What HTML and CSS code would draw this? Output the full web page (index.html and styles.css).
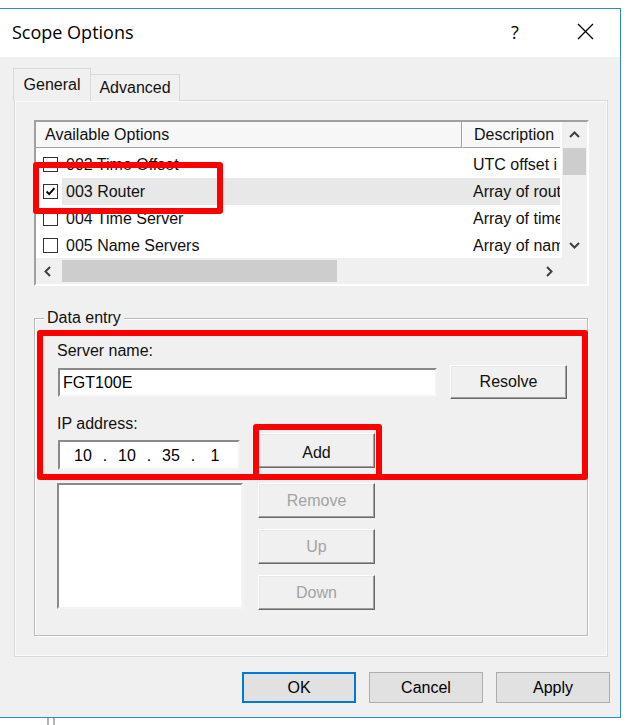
FILE: index.html
```html
<!DOCTYPE html>
<html lang="en">
<head>
    <meta charset="UTF-8">
    <meta name="viewport" content="width=device-width, initial-scale=1.0">
    <title>Scope Options</title>
    <link rel="stylesheet" href="styles.css">
</head>
<body>
    <div class="dialog">
        <div class="titlebar">
            <span class="title">Scope Options</span>
            <span class="help">?</span>
            <svg class="close" viewBox="0 0 17 17"><path d="M1 1L16 16M16 1L1 16"/></svg>
        </div>

        <div class="client">
            <div class="tabs">
                <div class="tab active">General</div>
                <div class="tab">Advanced</div>
            </div>

            <div class="panel">
                <!-- Options list -->
                <div class="listview">
                    <div class="lv-main">
                        <div class="lv-header">
                            <div class="h-name">Available Options</div>
                            <div class="h-desc">Description</div>
                        </div>
                        <div class="lv-row">
                            <span class="check"></span>
                            <span class="name">002 Time Offset</span>
                            <span class="desc">UTC offset i</span>
                        </div>
                        <div class="lv-row selected">
                            <span class="check"><svg viewBox="0 0 15 15"><path d="M3 7.5L6 10.5L12 3.5"/></svg></span>
                            <span class="name">003 Router</span>
                            <span class="desc">Array of rout</span>
                        </div>
                        <div class="lv-row">
                            <span class="check"></span>
                            <span class="name">004 Time Server</span>
                            <span class="desc">Array of time</span>
                        </div>
                        <div class="lv-row">
                            <span class="check"></span>
                            <span class="name">005 Name Servers</span>
                            <span class="desc">Array of nam</span>
                        </div>
                    </div>
                    <div class="vscroll">
                        <span class="arrow"><svg viewBox="0 0 11 7"><polyline points="1,6 5.5,1.5 10,6"/></svg></span>
                        <span class="vthumb"></span>
                        <span class="arrow bottom"><svg viewBox="0 0 11 7"><polyline points="1,1 5.5,5.5 10,1"/></svg></span>
                    </div>
                    <div class="hscroll">
                        <span class="harrow"><svg viewBox="0 0 7 11"><polyline points="6,1 1.5,5.5 6,10"/></svg></span>
                        <span class="hthumb"></span>
                        <span class="harrow right"><svg viewBox="0 0 7 11"><polyline points="1,1 5.5,5.5 1,10"/></svg></span>
                    </div>
                    <div class="corner"></div>
                </div>

                <!-- Data entry -->
                <div class="group">
                    <div class="group-title">Data entry</div>
                    <div class="field-label">Server name:</div>
                    <div class="row row-server">
                        <div class="input server">FGT100E</div>
                        <button class="btn3d resolve">Resolve</button>
                    </div>
                    <div class="field-label ip-label">IP address:</div>
                    <div class="row row-ip">
                        <div class="input ip">
                            <span class="octet">10</span><span class="dot">.</span>
                            <span class="octet">10</span><span class="dot">.</span>
                            <span class="octet">35</span><span class="dot">.</span>
                            <span class="octet">1</span>
                        </div>
                        <button class="btn3d add">Add</button>
                    </div>
                    <div class="row row-list">
                        <div class="listbox"></div>
                        <div class="btn-col">
                            <button class="btn3d" disabled>Remove</button>
                            <button class="btn3d" disabled>Up</button>
                            <button class="btn3d" disabled>Down</button>
                        </div>
                    </div>
                </div>
            </div>

            <div class="actions">
                <button class="btn default">OK</button>
                <button class="btn">Cancel</button>
                <button class="btn">Apply</button>
            </div>
        </div>

        <!-- red annotation boxes -->
        <div class="mark mark-router"></div>
        <div class="mark mark-entry"></div>
        <div class="mark mark-add"></div>
    </div>
    <div class="stub"></div>
</body>
</html>
```

FILE: styles.css
```css
* {
    box-sizing: border-box;
    margin: 0;
    padding: 0;
}

body {
    background: #fff;
    font-family: "Liberation Sans", Arial, sans-serif;
    font-size: 16px;
    color: #111;
}

.dialog {
    position: relative;
    width: 621px;
    margin-top: 8px;
    border: 1px solid #2f88d4;
    border-left: none;
    background: #fff;
}

.titlebar {
    display: flex;
    align-items: center;
    height: 48px;
    padding: 0 0 3px 12px;
    background: #fff;
}

.title {
    flex: 1;
    font-family: "Open Sans", sans-serif;
    font-size: 18px;
    color: #000;
}

.help {
    width: 20px;
    margin-right: 52px;
    text-align: center;
    font-family: "Open Sans", sans-serif;
    font-size: 18px;
    color: #000;
}

.close {
    width: 17px;
    height: 17px;
    margin-right: 26px;
    stroke: #000;
    stroke-width: 1.3;
    fill: none;
}

.client {
    background: #f0f0f0;
    padding: 11px 10px 14px 13px;
}

.tabs {
    position: relative;
    z-index: 1;
    display: flex;
    align-items: flex-end;
    height: 33px;
    margin-bottom: -1px;
}

.tab {
    width: 89px;
    height: 27px;
    border: 1px solid #d9d9d9;
    border-left: none;
    border-bottom: none;
    background: #f0f0f0;
    line-height: 26px;
    text-align: center;
}

.tab.active {
    width: 78px;
    height: 33px;
    border-left: 1px solid #d9d9d9;
    line-height: 31px;
}

.panel {
    width: 594px;
    height: 557px;
    margin-left: 1px;
    padding: 19px 19px 0;
    border: 1px solid #d9d9d9;
    box-shadow: inset 1px 1px 0 #fbfbfb, inset -1px -1px 0 #fbfbfb;
}

/* list view */
.listview {
    display: grid;
    grid-template-columns: 526px 25px;
    grid-template-rows: 136px 26px;
    width: 555px;
    height: 166px;
    border: 2px solid;
    border-color: #a0a0a0 #fff #fff #a0a0a0;
    background: #fff;
}

.lv-main {
    overflow: hidden;
    background: #fff;
}

.lv-header {
    display: flex;
    height: 26px;
    margin-bottom: 3px;
    line-height: 25px;
}

.h-name {
    width: 426px;
    padding-left: 9px;
    border-right: 1px solid #a0a0a0;
    border-bottom: 1px solid #a0a0a0;
    background: #f7f7f7;
}

.h-desc {
    width: 98px;
    padding-left: 11px;
    border-left: 1px solid #fff;
    border-bottom: 1px solid #a0a0a0;
    background: #f7f7f7;
    white-space: nowrap;
    overflow: hidden;
}

.lv-row {
    display: flex;
    align-items: center;
    height: 27px;
}

.check {
    width: 15px;
    height: 15px;
    margin-left: 7px;
    border: 1px solid #333;
    background: #fff;
}

.check svg {
    display: block;
    width: 13px;
    height: 13px;
    fill: none;
    stroke: #000;
    stroke-width: 2.2;
}

.name {
    width: 400px;
    height: 27px;
    margin-left: 4px;
    padding-left: 4px;
    line-height: 27px;
    white-space: nowrap;
}

.desc {
    width: 98px;
    height: 27px;
    padding-left: 11px;
    line-height: 27px;
    white-space: nowrap;
    overflow: hidden;
}

.lv-row.selected .name,
.lv-row.selected .desc {
    background: #e8e8e8;
}

.vscroll {
    display: flex;
    flex-direction: column;
    align-items: center;
    background: #f0f0f0;
}

.arrow {
    display: flex;
    align-items: center;
    justify-content: center;
    width: 25px;
    height: 25px;
}

.arrow.bottom {
    margin-top: auto;
}

.arrow svg {
    width: 11px;
    height: 7px;
}

.vthumb {
    width: 23px;
    height: 27px;
    margin-top: 1px;
    background: #cdcdcd;
}

.hscroll {
    display: flex;
    align-items: center;
    background: #f0f0f0;
}

.harrow {
    display: flex;
    align-items: center;
    justify-content: center;
    width: 22px;
    height: 26px;
}

.harrow svg {
    width: 7px;
    height: 11px;
}

.harrow.right {
    width: 26px;
    margin-left: auto;
}

.arrow polyline,
.harrow polyline {
    fill: none;
    stroke: #404040;
    stroke-width: 2;
}

.hthumb {
    width: 275px;
    height: 22px;
    margin-left: 4px;
    background: #cdcdcd;
}

.corner {
    background: #f0f0f0;
}

/* data entry group */
.group {
    width: 554px;
    margin-top: 32px;
    padding: 0 0 25px 22px;
    border: 1px solid #b9b9b9;
    box-shadow: inset 1px 1px 0 #fff, 1px 1px 0 #fff;
}

.group-title {
    display: table;
    margin: -11px 0 0 -13px;
    padding: 0 3px;
    background: #f0f0f0;
    line-height: 20px;
}

.field-label {
    margin-top: 13px;
    line-height: 20px;
}

.ip-label {
    margin-top: 16px;
    line-height: 18px;
}

.row {
    display: flex;
}

.row-server {
    align-items: center;
    margin-top: 4px;
}

.row-ip {
    align-items: flex-start;
}

.row-list {
    margin-top: 13px;
}

.input {
    margin-left: 1px;
    border: 2px solid;
    border-color: #8a8a8a #f4f4f4 #f4f4f4 #8a8a8a;
    background: #fff;
    color: #000;
}

.server {
    width: 379px;
    height: 29px;
    padding-left: 3px;
    line-height: 25px;
}

.ip {
    display: flex;
    width: 182px;
    height: 30px;
    margin-top: 7px;
    padding-left: 5px;
    line-height: 27px;
}

.octet {
    width: 36px;
    text-align: center;
}

.dot {
    width: 8px;
    text-align: center;
}

.btn3d {
    width: 117px;
    height: 35px;
    border: 1px solid;
    border-color: #fff #696969 #696969 #fff;
    background: #f0f0f0;
    box-shadow: inset -1px -1px 0 #a0a0a0, inset 1px 1px 0 #e8e8e8;
    font: inherit;
    color: #111;
}

.btn3d:disabled {
    color: #a3a3a3;
}

.resolve {
    height: 34px;
    margin-left: 13px;
}

.add {
    margin-left: 18px;
    padding-top: 4px;
}

.listbox {
    width: 186px;
    height: 126px;
    border: 2px solid;
    border-color: #8a8a8a #f4f4f4 #f4f4f4 #8a8a8a;
    background: #fff;
}

.btn-col {
    display: flex;
    flex-direction: column;
    gap: 11px;
    margin-left: 15px;
}

/* bottom buttons */
.actions {
    display: flex;
    justify-content: flex-end;
    gap: 13px;
    margin-top: 15px;
}

.btn {
    width: 114px;
    height: 31px;
    border: 1px solid #adadad;
    background: #e1e1e1;
    font: inherit;
    color: #000;
}

.btn.default {
    border: 2px solid #0078d7;
}

/* annotations */
.mark {
    position: absolute;
    border: 6px solid #f00;
    border-radius: 3px;
}

.mark-router {
    left: 33px;
    top: 153px;
    width: 190px;
    height: 52px;
}

.mark-entry {
    left: 37px;
    top: 321px;
    width: 551px;
    height: 150px;
}

.mark-add {
    left: 253px;
    top: 415px;
    width: 129px;
    height: 56px;
}

.stub {
    width: 8px;
    height: 7px;
    margin-left: 47px;
    border-left: 2px solid #b4b4b4;
    border-right: 2px solid #b4b4b4;
}
```
